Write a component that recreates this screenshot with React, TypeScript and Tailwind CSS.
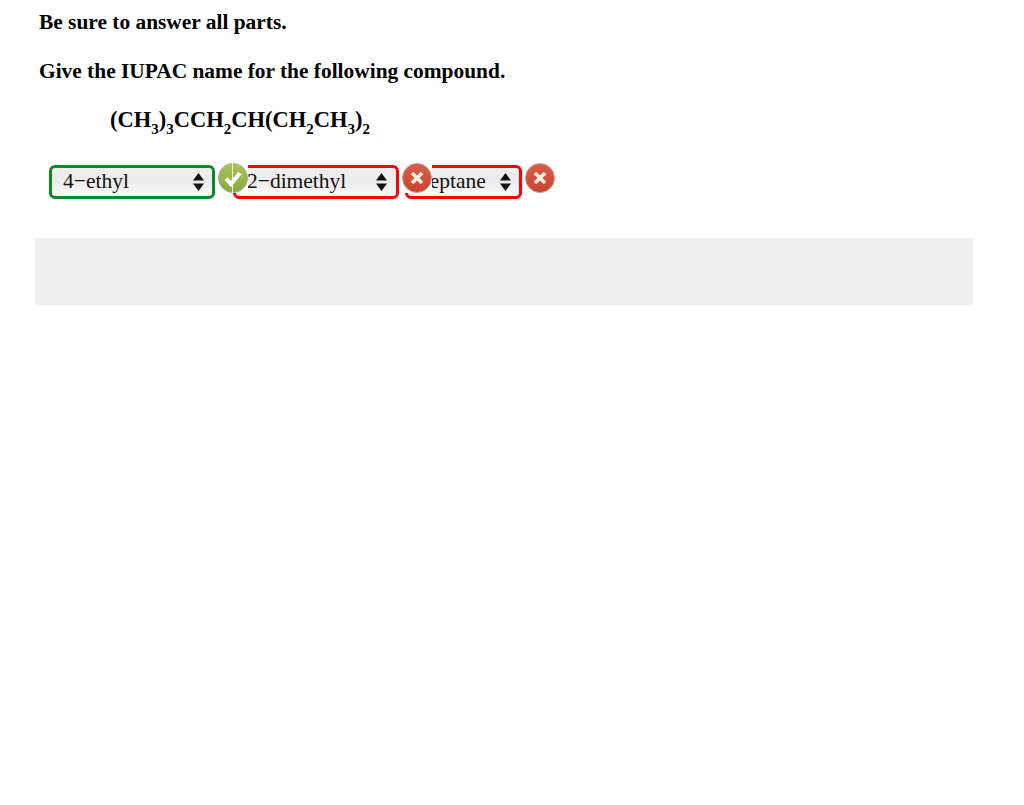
import React from "react";

function Check() {
  return (
    <svg width="30" height="30" viewBox="0 0 30 30" className="block bg-white">
      <defs>
        <linearGradient id="g" x1="0" y1="0" x2="0" y2="1">
          <stop offset="0" stopColor="#a9c45a" />
          <stop offset="1" stopColor="#86a83e" />
        </linearGradient>
      </defs>
      <circle cx="15" cy="15" r="14.5" fill="url(#g)" stroke="#a9a98c" />
      <path d="M8 15.5 L13 21 L22 10" fill="none" stroke="#fff" strokeWidth="4.2" />
      <path d="M14.5 0 V30" stroke="#fff" strokeOpacity="0.85" strokeWidth="1" />
    </svg>
  );
}

function Cross() {
  return (
    <svg width="30" height="30" viewBox="0 0 30 30" className="block bg-white">
      <defs>
        <linearGradient id="r" x1="0" y1="0" x2="0" y2="1">
          <stop offset="0" stopColor="#d85f4b" />
          <stop offset="1" stopColor="#c9432f" />
        </linearGradient>
      </defs>
      <circle cx="15" cy="15" r="14.5" fill="url(#r)" stroke="#c9a08f" />
      <path d="M10 10 L20 20 M20 10 L10 20" fill="none" stroke="#fbeee8" strokeWidth="3.6" />
    </svg>
  );
}

function Arrows() {
  return (
    <svg width="11" height="18" viewBox="0 0 11 18" className="block">
      <path d="M5.5 0 L11 7.5 H0 Z M0 10.5 H11 L5.5 18 Z" fill="#111" />
    </svg>
  );
}

function Select({ text, color, w, pr }: { text: string; color: string; w: string; pr: string }) {
  return (
    <div className={`h-[34px] rounded-[6px] border-[3px] ${color} ${w} ${pr} pl-[11px] flex items-center justify-between bg-gradient-to-b from-[#eeeeee] via-[#ececec] to-[#fbfbfb] text-[21.5px] leading-none text-[#111]`}>
      <span className="whitespace-pre">{text}</span>
      <Arrows />
    </div>
  );
}

export default function App() {
  const sub = "text-[15px] leading-none align-[-3px]";
  return (
    <div className="w-[1024px] h-[805px] bg-white text-black font-['Liberation_Serif',serif] overflow-hidden">
      <div className="pl-[39px] pt-[10px] text-[21.4px] leading-[24px] font-bold">Be sure to answer all parts.</div>
      <div className="pl-[39px] pt-[25px] text-[21.4px] leading-[24px] font-bold">Give the IUPAC name for the following compound.</div>
      <div className="pl-[110px] pt-[24px] text-[22.5px] leading-[26px] font-bold">
        (CH<sub className={sub}>3</sub>)<sub className={sub}>3</sub>CCH<sub className={sub}>2</sub>CH(CH<sub className={sub}>2</sub>CH<sub className={sub}>3</sub>)<sub className={sub}>2</sub>
      </div>
      <div className="flex items-start pl-[49px] pt-[32px] h-[105px]">
        <Select text="4−ethyl" color="border-[#0a8a25]" w="w-[166px]" pr="pr-[8px]" />
        <div className="relative z-10 -mt-[2px] ml-[3px] -mr-[15px]"><Check /></div>
        <Select text="2−dimethyl" color="border-[#ff0000]" w="w-[166px]" pr="pr-[9px]" />
        <div className="relative z-10 -mt-[2px] ml-[3px] -mr-[27px]"><Cross /></div>
        <Select text="heptane" color="border-[#ff0000]" w="w-[117px]" pr="pr-[8px]" />
        <div className="relative z-10 -mt-[2px] ml-[3px]"><Cross /></div>
      </div>
      <div className="ml-[35px] w-[938px] h-[67px] bg-[#eeeeee]" />
    </div>
  );
}
